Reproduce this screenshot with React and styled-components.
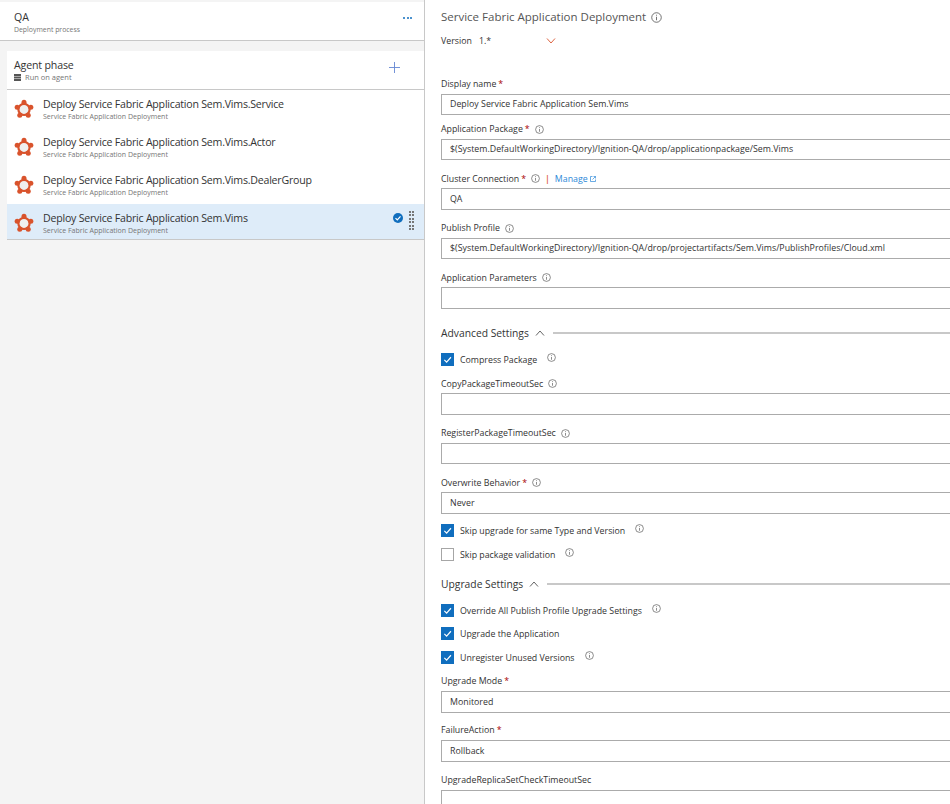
import React from "react";
import styled, { createGlobalStyle } from "styled-components";

const GlobalStyle = createGlobalStyle`
  html, body {
    margin: 0;
    padding: 0;
    background: #fff;
    font-family: "Open Sans", "Noto Sans", sans-serif;
  }
  * { box-sizing: border-box; }
`;

const Page = styled.div`
  width: 950px;
  height: 804px;
  display: grid;
  grid-template-columns: 425px 1fr;
  overflow: hidden;
`;

const LeftPanel = styled.div`
  background: #f4f4f4;
  border-right: 1px solid #c8c8c8;
  padding-top: 2px;
`;

const Header = styled.div`
  height: 39px;
  background: #fff;
  border-bottom: 1px solid #c8c8c8;
  padding: 8px 12px 0 14px;
  display: flex;
  justify-content: space-between;
  margin-bottom: 10px;
`;

const HeaderTitle = styled.div`
  font-size: 10.6px;
  line-height: 14px;
  color: #333;
`;

const SubText = styled.div`
  font-size: ${(p) => p.$size || 7.5}px;
  line-height: 11px;
  color: #767676;
  display: flex;
  align-items: center;
  gap: 4px;
`;

const Dots = styled.div`
  display: flex;
  gap: 1.5px;
  padding-top: 7px;
  span {
    width: 2px;
    height: 2px;
    border-radius: 50%;
    background: #106ebe;
  }
`;

const Phase = styled.div`
  margin-left: 7px;
  height: 39px;
  background: #fff;
  border-bottom: 1px solid #c8c8c8;
  padding: 7px 23px 0 7px;
  display: flex;
  justify-content: space-between;
`;

const PhaseTitle = styled.div`
  font-size: 10.6px;
  line-height: 14px;
  letter-spacing: -0.15px;
  color: #333;
`;

const AddIcon = styled.svg`
  width: 13px;
  height: 13px;
  margin-top: 3px;
`;

const TaskRow = styled.div`
  margin-left: 7px;
  height: ${(p) => (p.$selected ? 36 : 38)}px;
  display: flex;
  align-items: center;
  padding: ${(p) => (p.$selected ? "2px" : "0")} 10px 0 7px;
  background: ${(p) => (p.$selected ? "#deecf9" : "#fff")};
  border-bottom: 1px solid ${(p) => (p.$selected ? "#c8c8c8" : "transparent")};
`;

const TaskText = styled.div`
  margin-left: 9px;
  flex: 1;
`;

const TaskName = styled.div`
  font-size: 10.6px;
  line-height: 13px;
  margin-top: 2px;
  letter-spacing: -0.22px;
  color: #333;
  white-space: nowrap;
`;

const SelectedMark = styled.svg`
  width: 10px;
  height: 10px;
  margin-bottom: 9px;
`;

const GripDots = styled.div`
  display: grid;
  grid-template-columns: 2px 2px;
  column-gap: 1px;
  row-gap: 1.4px;
  margin: 0 0 4px 6px;
  span {
    width: 2px;
    height: 2px;
    background: #767676;
  }
`;

const RightPanel = styled.div`
  padding: 9px 0 0 16px;
  overflow: hidden;
  background: #fff;
`;

const TitleRow = styled.div`
  display: flex;
  align-items: center;
  gap: 5px;
  font-size: 11.5px;
  line-height: 16px;
  color: #555;
`;

const VersionRow = styled.div`
  display: flex;
  align-items: center;
  font-size: 8.8px;
  line-height: 14px;
  color: #333;
  margin: 9px 0 28px;
  span + span {
    margin-left: 7px;
    width: 67px;
  }
`;

const Field = styled.div`
  height: ${(p) => p.$height || 49.5}px;
`;

const Label = styled.div`
  display: flex;
  align-items: center;
  gap: 5px;
  height: 16px;
  font-size: 8.8px;
  color: #333;
  margin-bottom: ${(p) => p.$gap || 1.5}px;
`;

const Required = styled.span`
  color: #a80000;
  margin-left: -3px;
`;

const Input = styled.div`
  width: 530px;
  height: 21.5px;
  border: 1px solid #ababab;
  padding: 0 8px;
  display: flex;
  align-items: center;
  font-size: 8.8px;
  letter-spacing: 0.02px;
  color: #333;
  white-space: nowrap;
  overflow: hidden;
`;

const SectionHead = styled.div`
  display: flex;
  align-items: center;
  gap: 6px;
  height: 16px;
  font-size: 10.3px;
  color: #333;
  margin: ${(p) => p.$margin};
  &::after {
    content: "";
    flex: 1;
    height: 2px;
    background: #c8c8c8;
    margin-left: 2px;
  }
`;

const CheckRow = styled.div`
  display: flex;
  align-items: center;
  height: 16px;
  font-size: 8.8px;
  color: #333;
  margin-bottom: ${(p) => p.$gap || 0}px;
`;

const Box = styled.div`
  width: 13px;
  height: 13px;
  margin-right: 6px;
  display: flex;
  align-items: center;
  justify-content: center;
  background: ${(p) => (p.$checked ? "#106ebe" : "#fff")};
  border: 1px solid ${(p) => (p.$checked ? "#106ebe" : "#a6a6a6")};
`;

const InfoHolder = styled.span`
  display: inline-flex;
  margin: ${(p) => p.$margin || "0"};
`;

const Manage = styled.span`
  color: #2b88d8;
  display: inline-flex;
  align-items: center;
  gap: 2px;
`;

const Pipe = styled.span`
  color: #d9532c;
  font-weight: 600;
`;

function Info({ size = 9, margin }) {
  return (
    <InfoHolder $margin={margin}>
      <svg width={size} height={size} viewBox="0 0 12 12" fill="none" stroke="#555" strokeWidth="0.9">
        <circle cx="6" cy="6" r="5.2" />
        <path d="M6 5.2V9M6 3v1" />
      </svg>
    </InfoHolder>
  );
}

function FabricIcon() {
  const lobes = [0, 1, 2, 3, 4].map((i) => {
    const a = (-90 + i * 72) * (Math.PI / 180);
    return [10 + 7.2 * Math.cos(a), 10.4 + 7.2 * Math.sin(a)];
  });
  return (
    <svg width="20" height="20" viewBox="0 0 20 20">
      <circle cx="10" cy="10.4" r="5.6" fill="#efefef" stroke="#d9532c" strokeWidth="2.2" />
      {lobes.map((p, i) => (
        <circle key={i} cx={p[0]} cy={p[1]} r="2.5" fill="#d9532c" />
      ))}
    </svg>
  );
}

function Check() {
  return (
    <svg width="9" height="9" viewBox="0 0 10 10" fill="none" stroke="#fff" strokeWidth="1.3">
      <path d="M1.5 5.5 4 8l4.8-5.5" />
    </svg>
  );
}

function Chevron({ up, color = "#555" }) {
  return (
    <svg width="10" height="6" viewBox="0 0 10 6" fill="none" stroke={color} strokeWidth="0.9">
      <path d={up ? "M1 5.5 5 1l4 4.5" : "M1 .5 5 5l4-4.5"} />
    </svg>
  );
}

const tasks = [
  { name: "Deploy Service Fabric Application Sem.Vims.Service" },
  { name: "Deploy Service Fabric Application Sem.Vims.Actor" },
  { name: "Deploy Service Fabric Application Sem.Vims.DealerGroup" },
  { name: "Deploy Service Fabric Application Sem.Vims", selected: true },
];

function App() {
  return (
    <Page>
      <GlobalStyle />
      <LeftPanel>
        <Header>
          <div>
            <HeaderTitle>QA</HeaderTitle>
            <SubText $size={6.9}>Deployment process</SubText>
          </div>
          <Dots>
            <span />
            <span />
            <span />
          </Dots>
        </Header>
        <Phase>
          <div>
            <PhaseTitle>Agent phase</PhaseTitle>
            <SubText>
              <svg width="7" height="7" viewBox="0 0 7 7" fill="#555">
                <path d="M0 0h7v2H0zM0 2.5h7v2H0zM0 5h7v2H0z" />
              </svg>
              Run on agent
            </SubText>
          </div>
          <AddIcon viewBox="0 0 13 13" stroke="#6487d2" strokeWidth="0.9">
            <path d="M6.5 1v11M1 6.5h11" />
          </AddIcon>
        </Phase>
        {tasks.map((t) => (
          <TaskRow key={t.name} $selected={t.selected}>
            <FabricIcon />
            <TaskText>
              <TaskName>{t.name}</TaskName>
              <SubText $size={7}>Service Fabric Application Deployment</SubText>
            </TaskText>
            {t.selected && (
              <>
                <SelectedMark viewBox="0 0 10 10">
                  <circle cx="5" cy="5" r="5" fill="#106ebe" />
                  <path d="M2.5 5.2 4.3 7l3.2-3.6" fill="none" stroke="#fff" strokeWidth="1.2" />
                </SelectedMark>
                <GripDots>
                  {Array.from({ length: 12 }).map((_, i) => (
                    <span key={i} />
                  ))}
                </GripDots>
              </>
            )}
          </TaskRow>
        ))}
      </LeftPanel>
      <RightPanel>
        <TitleRow>
          Service Fabric Application Deployment
          <Info size={11} />
        </TitleRow>
        <VersionRow>
          <span>Version</span>
          <span>1.*</span>
          <Chevron color="#d9532c" />
        </VersionRow>
        <Field $height={45}>
          <Label>
            Display name <Required>*</Required>
          </Label>
          <Input>Deploy Service Fabric Application Sem.Vims</Input>
        </Field>
        <Field>
          <Label>
            Application Package <Required>*</Required> <Info />
          </Label>
          <Input>$(System.DefaultWorkingDirectory)/Ignition-QA/drop/applicationpackage/Sem.Vims</Input>
        </Field>
        <Field>
          <Label>
            Cluster Connection <Required>*</Required> <Info /> <Pipe>|</Pipe>
            <Manage>
              Manage
              <svg width="6" height="6" viewBox="0 0 6 6" fill="none" stroke="#2b88d8" strokeWidth="0.7">
                <path d="M2.5.5H.5v5h5v-2M3.5.5h2v2M5.5.5 2.5 3.5" />
              </svg>
            </Manage>
          </Label>
          <Input>QA</Input>
        </Field>
        <Field>
          <Label>
            Publish Profile <Info />
          </Label>
          <Input>$(System.DefaultWorkingDirectory)/Ignition-QA/drop/projectartifacts/Sem.Vims/PublishProfiles/Cloud.xml</Input>
        </Field>
        <Field>
          <Label>
            Application Parameters <Info />
          </Label>
          <Input />
        </Field>
        <SectionHead $margin="5.5px 0 11px">
          Advanced Settings <Chevron up />
        </SectionHead>
        <CheckRow $gap={8}>
          <Box $checked>
            <Check />
          </Box>
          Compress Package
          <Info margin="-4px 0 0 10px" />
        </CheckRow>
        <Field>
          <Label>
            CopyPackageTimeoutSec <Info />
          </Label>
          <Input />
        </Field>
        <Field>
          <Label>
            RegisterPackageTimeoutSec <Info />
          </Label>
          <Input />
        </Field>
        <Field $height={48}>
          <Label>
            Overwrite Behavior <Required>*</Required> <Info />
          </Label>
          <Input>Never</Input>
        </Field>
        <CheckRow $gap={8}>
          <Box $checked>
            <Check />
          </Box>
          Skip upgrade for same Type and Version
          <Info margin="-4px 0 0 10px" />
        </CheckRow>
        <CheckRow>
          <Box />
          Skip package validation
          <Info margin="-4px 0 0 10px" />
        </CheckRow>
        <SectionHead $margin="13px 0 11px">
          Upgrade Settings <Chevron up />
        </SectionHead>
        <CheckRow $gap={7}>
          <Box $checked>
            <Check />
          </Box>
          Override All Publish Profile Upgrade Settings
          <Info margin="-4px 0 0 10px" />
        </CheckRow>
        <CheckRow $gap={8}>
          <Box $checked>
            <Check />
          </Box>
          Upgrade the Application
        </CheckRow>
        <CheckRow $gap={7}>
          <Box $checked>
            <Check />
          </Box>
          Unregister Unused Versions
          <Info margin="-4px 0 0 10px" />
        </CheckRow>
        <Field>
          <Label $gap={2.5}>
            Upgrade Mode <Required>*</Required>
          </Label>
          <Input>Monitored</Input>
        </Field>
        <Field>
          <Label $gap={2}>
            FailureAction <Required>*</Required>
          </Label>
          <Input>Rollback</Input>
        </Field>
        <Field>
          <Label $gap={2}>UpgradeReplicaSetCheckTimeoutSec</Label>
          <Input />
        </Field>
      </RightPanel>
    </Page>
  );
}

export default App;
